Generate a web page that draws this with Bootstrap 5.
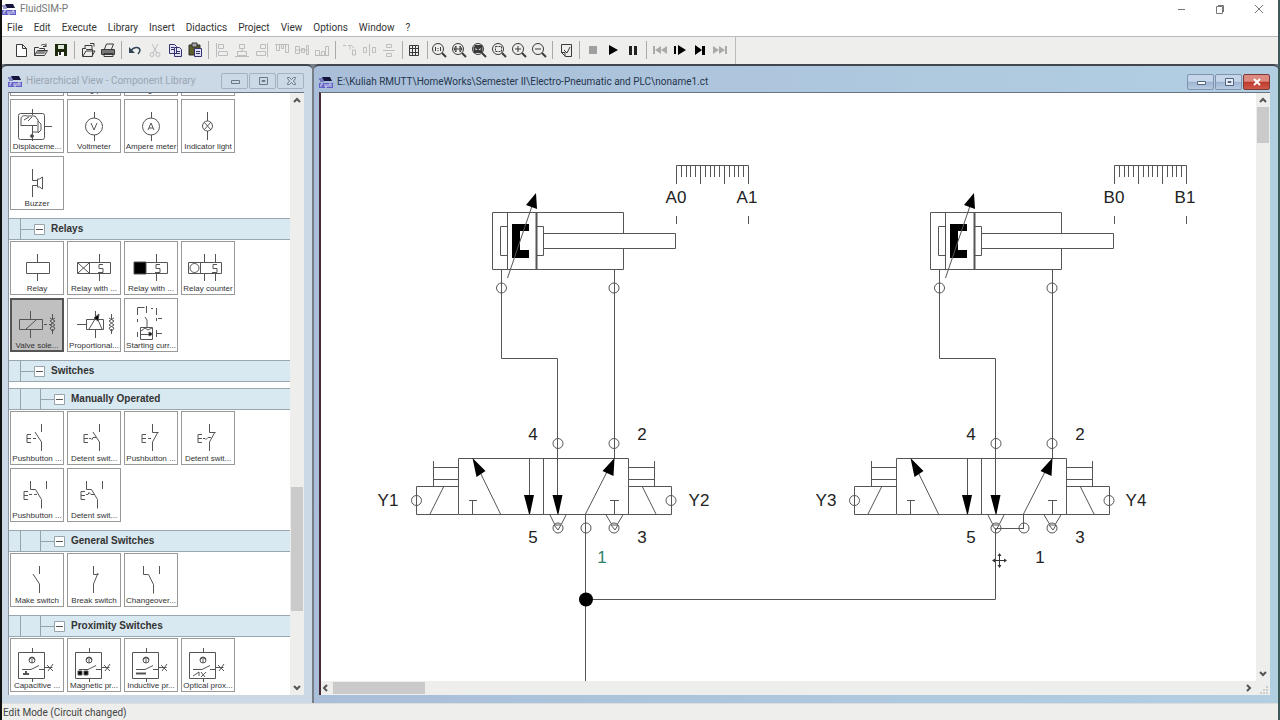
<!DOCTYPE html>
<html lang="en">
<head>
<meta charset="utf-8">
<meta name="viewport" content="width=device-width, initial-scale=1">
<title>FluidSIM-P</title>
<link href="https://cdn.jsdelivr.net/npm/bootstrap@5.3.0/dist/css/bootstrap.min.css" rel="stylesheet">
<style>
  body { font-family: Roboto, "Open Sans", sans-serif; font-size: 10px; line-height: 16px; color: #333; background: #eeeeed; }
  .app { border-left: 2px solid #111; border-right: 2px solid #3c5a5a; }
  button { border: 0; background: none; padding: 0; color: inherit; line-height: 1; }
  svg { display: block; }
  .ln { fill: none; stroke: currentColor; stroke-width: 1; }
  .app-title { height: 18px; color: #777; background: #fff; }
  .app-title button { width: 39px; height: 18px; color: #777; }
  .app-menu { height: 18px; background: #fff; }
  .app-menu a { padding: 0 6px 0 5px; color: #333; text-decoration: none; line-height: 19px; }
  .tools { height: 28px; border-top: 1px solid #bbb; background: #eeeeed; }
  .tools-band { border-right: 1px solid #bbb; padding: 0 5px 2px 9px; }
  .tool { width: 20px; height: 20px; color: #3a3a3a; }
  .tool svg { margin: 2px; }
  .tool:disabled { color: #bdbdbd; }
  .rule { width: 7px; height: 18px; border-left: 1px solid #aaa; margin-left: 3px; margin-right: -3px; }
  .rule-tight { width: 5px; }
  .mdi { min-height: 0; background: #777e86; gap: 2px; }
  .win { border-top: 2px solid #42474f; border-radius: 5px 5px 0 0; min-height: 0; }
  .win-lib { width: 310px; padding: 0 8px 8px 6px; background: #cbd8e6; }
  .win-doc { min-width: 0; padding: 0 8px 8px 5px; background: linear-gradient(90deg, #a9bed9, #b2cfe2); }
  .win-head { height: 26px; padding-top: 5px; }
  .win-lib .win-head { color: #9aa5b1; }
  .win-doc .win-head { color: #26364c; }
  .win-btn { width: 27px; height: 16px; margin-left: 1px; border: 1px solid #a5b1c0; border-radius: 2px; color: #6d7885; display: flex; align-items: center; justify-content: center; }
  .win-doc .win-btn { border-color: #7f93ad; background: linear-gradient(#c6d6ea 45%, #9cb3d0 50%, #b8cbe2); color: #52657e; }
  .win-doc .win-close { border-color: #7d3a3a; background: linear-gradient(#dd8b80 45%, #bd3a2c 50%, #cd5a4a); color: #fff; }
  .pane { border-top: 1px solid #6b7380; min-height: 0; background: #fff; }
  .win-lib .pane { border-left: 1px solid #8d97a4; }
  .win-doc .pane { border-left: 2px solid #4a2a34; }
  .tree { min-width: 0; overflow: hidden; font-family: "Liberation Sans", sans-serif; }
  .tree-top { margin-top: -52px; }
  .tiles { display: grid; grid-template-columns: repeat(4, 54px); gap: 3px; padding: 1px 0 8px 1px; }
  .tile { position: relative; height: 54px; border: 1px solid #999; background: #fff; color: #555; overflow: hidden; }
  .tile svg { position: absolute; left: -1px; top: -1px; }
  .tile span { position: absolute; left: 0; right: 0; bottom: 1px; text-align: center; font-size: 8px; line-height: 9px; color: #333; white-space: nowrap; }
  .tile.picked { background: #c0c0c0; border: 2px solid #555; }
  .tile.picked svg { left: -2px; top: -2px; }
  .tile.picked span { bottom: 0; }
  .sect { height: 22px; border-top: 1px solid #9aa6ae; border-bottom: 1px solid #9aa6ae; background: #d9e9f1; color: #333; font-size: 10px; font-weight: bold; }
  .sect + .sect { margin-top: 6px; }
  .sect svg { color: #98a4ab; }
  .sect button { font: inherit; line-height: 20px; display: flex; align-items: center; }
  .vbar { width: 14px; background: #eeeeed; color: #555; }
  .hbar { height: 14px; background: #eeeeed; color: #555; }
  .thumb { background: #cacaca; }
  .lib-above { flex: 0 0 384px; }
  .lib-thumb { height: 124px; width: 12px; }
  .doc-thumb { height: 36px; width: 12px; }
  .doc-hthumb { width: 92px; height: 12px; }
  .sheet { min-height: 0; min-width: 0; }
  .sheet svg { font: 17px "Liberation Sans", sans-serif; color: #555; }
  .state { height: 17px; padding: 1px 0 0 1px; background: #eeeeed; border-top: 1px solid #ddd; color: #444; }
</style>
</head>
<body>
<svg width="0" height="0" class="position-absolute" aria-hidden="true">
  <defs>
    <symbol id="logo" viewBox="0 0 14 12">
      <path d="M3 1h8l2 4H5z" fill="#14143c"/><path d="M0 3h4M1 5h4" stroke="#3838a0"/><path d="M0 7h14v5H0z" fill="#6060c8"/><path d="M2 11V8h2m2 0v3h2V8m2 3V8h2v3" class="ln" style="stroke:#dde"/>
    </symbol>
    <symbol id="lens" viewBox="0 0 16 16"><circle cx="7" cy="7" r="5.5" class="ln"/><path d="M11 11l4 4" stroke="currentColor" stroke-width="2"/></symbol>
    <symbol id="up" viewBox="0 0 8 6"><path d="M1 5l3-3 3 3" fill="none" stroke="currentColor" stroke-width="2"/></symbol>
    <symbol id="fold0" viewBox="0 0 38 20"><path d="M11.500 0v20M11.500 10.500h14" class="ln"/><path d="M25.500 5.500h10v10h-10z" fill="#fff" stroke="currentColor"/><path d="M27 10.500h7" stroke="#555"/></symbol>
    <symbol id="fold1" viewBox="0 0 58 20"><path d="M11.500 0v20M31.500 0v20M31.500 10.500h14" class="ln"/><path d="M45.500 5.500h10v10h-10z" fill="#fff" stroke="currentColor"/><path d="M47 10.500h7" stroke="#555"/></symbol>
    <symbol id="knob" viewBox="0 0 54 54"><path d="M21 23.500h-4v8h4M17 27.500h4" class="ln"/></symbol>
    <symbol id="prox" viewBox="0 0 54 54"><path d="M8.500 14.500h26v26h-26zM22.500 10v4M22.500 41v3M12 31.500h9l8-4M29 31.500h5M34.500 29.500h8M37 27l6 6M43 26l-5 7" class="ln"/><circle cx="22" cy="22" r="3" class="ln"/><path d="M22 19v6M19 22l3-3 3 3" class="ln"/></symbol>
    <g id="ruler" class="ln"><path d="M676.500 184V165.500H748.500V184M700.500 165v19M724.500 165v19M681.500 165v12M686.500 165v12M690.500 165v12M695.500 165v12M705.500 165v12M710.500 165v12M714.500 165v12M719.500 165v12M729.500 165v12M734.500 165v12M738.500 165v12M743.500 165v12M676.500 216v8M748.500 216v8"/></g>
    <g id="cylinder">
      <path class="ln" d="M492.500 212.500H623.500V269.500H492.500zM507.500 212v57M500.500 226.500h7v29h-7zM536.500 226.500h7v29h-7z"/>
      <path d="M536.500 212v57" stroke="currentColor" stroke-width="2"/>
      <path d="M543.500 233.500H675.500V248.500H543.500z" fill="#fff" stroke="currentColor"/>
      <path d="M512 224h17v7h-9v19h9v8h-17z" fill="#000"/>
      <path class="ln" d="M507.500 278L533 203"/><path d="M536 193l1 16-11-4z" fill="#000"/>
    </g>
    <g id="valve">
      <path class="ln" d="M458.500 458.500H628.500V514.500H458.500zM543.500 458v56M500.500 514L477 466M529.500 458v40M557.500 443v55M585.500 528v-14L610 466M469 500.500h8M472.500 500v14M610 500.500h9M614.500 500v14"/>
      <path d="M472.500 458l13 13-9 6zM614.500 458l-1 18-11-5zM524 495h10l-4 19h-1zM552.500 495h10l-4 19h-1z" fill="#000"/>
      <path class="ln" d="M458 486.500H416.500V514.500H458M443.500 487L430 514M433.500 461v25M433 467.500h25M433 479.500h25M628 486.500H671.500V514.500H628M642.500 487L656 514M654.500 461v25M628 467.500h27M628 479.500h27M549.500 514l5 10M566.500 514l-5 10M605.500 514l6 10M623.500 514l-6 10M554 525h7l-3 5-4-5M611 525h7l-3 5-4-5"/>
      <g class="ln"><circle cx="416.500" cy="500.500" r="5"/><circle cx="671" cy="500.500" r="5"/><circle cx="558" cy="443.500" r="5"/><circle cx="614" cy="443.500" r="5"/><circle cx="558" cy="528" r="5"/><circle cx="586" cy="528" r="5"/><circle cx="614" cy="528" r="5"/><circle cx="501.500" cy="288" r="5"/><circle cx="614" cy="288" r="5"/>
      <path d="M501.500 269v89.500H557.500V458M614.500 269V458"/></g>
    </g>
  </defs>
</svg>

<div class="app vh-100 d-flex flex-column overflow-hidden">
  <header class="app-title d-flex align-items-center">
    <svg width="14" height="12" class="me-1 flex-shrink-0"><use href="#logo"/></svg>
    <span>FluidSIM-P</span>
    <div class="ms-auto d-flex">
      <button aria-label="Minimize"><svg width="39" height="18" class="ln"><path d="M17 9.500h7"/></svg></button>
      <button aria-label="Restore"><svg width="39" height="18" class="ln"><path d="M16.500 6.500h6v7h-6zM18 5.500h5.500V12"/></svg></button>
      <button aria-label="Close"><svg width="39" height="18" class="ln"><path d="M16 5l8 8M24 5l-8 8"/></svg></button>
    </div>
  </header>
  <nav class="app-menu d-flex" aria-label="Main menu">
    <a href="#">File</a><a href="#">Edit</a><a href="#">Execute</a><a href="#">Library</a><a href="#">Insert</a><a href="#">Didactics</a><a href="#">Project</a><a href="#">View</a><a href="#">Options</a><a href="#">Window</a><a href="#">?</a>
  </nav>

  <div class="tools d-flex flex-shrink-0" role="toolbar" aria-label="Tools">
    <div class="tools-band d-flex align-items-center">
      <button class="tool" aria-label="New"><svg width="16" height="16"><path d="M3.500 2.500h6l4 4v8h-10zM9.500 2.500v4h4" class="ln" style="fill:#fff"/></svg></button>
      <button class="tool" aria-label="Open"><svg width="16" height="16"><path d="M1.500 13.500v-8h4l1 1h5v2M1.500 13.500l3-5h10l-3 5zM8 3.500c2-2 4-1 5 1m0-3v3h-3" class="ln"/><path d="M3 12l2-3h8l-2 3z" fill="#888"/></svg></button>
      <button class="tool" aria-label="Save"><svg width="16" height="16"><path d="M2 2h12v12H2z" fill="#1d2a10"/><path d="M5 3h6v4H5z" fill="#dfe6da"/><path d="M5 10h6v4H5z" fill="#fff"/><path d="M6 10h2v3H6z" fill="#222"/></svg></button>
      <span class="rule"></span>
      <button class="tool" aria-label="Preview"><svg width="16" height="16"><path d="M2.500 14.500v-8h3l1 1h6v7zM5 7V3.500h7V7M3 14l3-5h9l-3 5M10 1.500h4v3" class="ln"/></svg></button>
      <button class="tool" aria-label="Print"><svg width="16" height="16"><path d="M2 7h12v5H2z" fill="#777"/><path d="M4.500 7l2-5h7l-2 5M1.500 7.500h13v5h-13zM4 14.500h9v-3H4z" class="ln"/></svg></button>
      <span class="rule"></span>
      <button class="tool" aria-label="Undo"><svg width="16" height="16"><path d="M4 9c2-4 8-5 9-1 0 2-1 3-2 4" fill="none" stroke="#345" stroke-width="1.500"/><path d="M2 5v6h6z" fill="#345"/></svg></button>
      <button class="tool" disabled aria-label="Cut"><svg width="16" height="16"><path d="M5 2l5 9M11 2L6 11" class="ln"/><circle cx="5" cy="12.500" r="2" class="ln"/><circle cx="11" cy="12.500" r="2" class="ln"/></svg></button>
      <button class="tool" aria-label="Copy"><svg width="16" height="16" stroke="#33336e" fill="#e4e4f4"><path d="M2.500 2.500h5l2 2v7h-7zM7.500 5.500h5l2 2v7h-7z"/><path d="M4 5.500h3M4 7.500h3M9 9.500h4M9 11.500h4"/></svg></button>
      <button class="tool" aria-label="Paste"><svg width="16" height="16"><path d="M2 3h11v10H2z" fill="#5d5d28" stroke="#333"/><path d="M5 1h5v4H5z" fill="#aaa" stroke="#333"/><path d="M7.500 6.500h7v8h-7z" fill="#dfdff4" stroke="#33336e"/><path d="M9 9.500h4M9 11.500h4" stroke="#33336e"/></svg></button>
      <span class="rule"></span>
      <button class="tool" disabled aria-label="Align left"><svg width="16" height="16" class="ln"><path d="M2.500 1v14M4.500 2.500h5v4h-5zM4.500 9.500h9v4h-9z"/></svg></button>
      <button class="tool" disabled aria-label="Center horizontally"><svg width="16" height="16" class="ln"><path d="M5.500 2.500h5v4h-5zM3.500 9.500h9v4h-9zM8 6v4M1 14.500h14"/></svg></button>
      <button class="tool" disabled aria-label="Align right"><svg width="16" height="16" class="ln"><path d="M13.500 1v14M6.500 2.500h5v4h-5zM2.500 9.500h9v4h-9z"/></svg></button>
      <button class="tool" disabled aria-label="Align top"><svg width="16" height="16" class="ln"><path d="M1 2.500h14M2.500 2.500h3v6h-3zM7.500 2.500h2v4h-2zM11.500 2.500h3v8h-3z"/></svg></button>
      <button class="tool" disabled aria-label="Center vertically"><svg width="16" height="16" class="ln"><path d="M1.500 4.500h4v7h-4zM7.500 6.500h3v4h-3zM12.500 3.500h2v9h-2zM1 8h14"/></svg></button>
      <button class="tool" disabled aria-label="Align bottom"><svg width="16" height="16" class="ln"><path d="M1 13.500h14M1.500 8.500h4v5h-4zM7.500 9.500h3v4h-3zM11.500 4.500h3v9h-3z"/></svg></button>
      <span class="rule"></span>
      <button class="tool" disabled aria-label="Rotate"><svg width="16" height="16" class="ln"><path d="M2 3.500h3M7 3.500h2v4M11.500 8v5h3V8zM10 3l3 3"/></svg></button>
      <button class="tool" disabled aria-label="Mirror horizontally"><svg width="16" height="16" class="ln"><path d="M8.500 2v12M2.500 5.500h3v5h-3zM11.500 5.500h3v5h-3z"/></svg></button>
      <button class="tool" disabled aria-label="Mirror vertically"><svg width="16" height="16" class="ln"><path d="M2 8.500h12M5.500 2.500h5v3h-5zM5.500 11.500h5v3h-5z"/></svg></button>
      <span class="rule rule-tight"></span>
      <button class="tool" aria-label="Grid"><svg width="16" height="16"><path d="M3.500 3.500h9v10h-9zM6.500 3v11M9.500 3v11M3 6.500h10M3 10.500h10" class="ln"/></svg></button>
      <span class="rule rule-tight"></span>
      <button class="tool" aria-label="Zoom 1:1"><svg width="16" height="16"><use href="#lens"/><path d="M4.500 5v4M9.500 5v4M7 6v1M7 8v1" class="ln"/></svg></button>
      <button class="tool" aria-label="Previous zoom"><svg width="16" height="16"><use href="#lens"/><path d="M3 7h8M5 4v6l-2-3zM9 4v6l2-3z" class="ln"/></svg></button>
      <button class="tool" aria-label="Fit to window"><svg width="16" height="16"><use href="#lens"/><path d="M4 4l6 6M10 4l-6 6M3.500 5v5h7V4h-7" class="ln" style="stroke-width:2"/></svg></button>
      <button class="tool" aria-label="Zoom section"><svg width="16" height="16"><use href="#lens"/><path d="M4.500 4.500h6v5h-6z" class="ln" stroke-dasharray="2 1"/></svg></button>
      <button class="tool" aria-label="Zoom in"><svg width="16" height="16"><use href="#lens"/><path d="M4 7h6M7 4v6" class="ln"/></svg></button>
      <button class="tool" aria-label="Zoom out"><svg width="16" height="16"><use href="#lens"/><path d="M4 7h6" class="ln"/></svg></button>
      <span class="rule"></span>
      <button class="tool" aria-label="Check drawing"><svg width="16" height="16"><path d="M3.500 2.500h10v12h-6l-4-4zM3 10.500h4v4M6 8l3 3 3-6" class="ln"/></svg></button>
      <span class="rule"></span>
      <button class="tool" disabled aria-label="Stop"><svg width="16" height="16"><path d="M4 4h8v8H4z" fill="#a0a0a0"/></svg></button>
      <button class="tool" aria-label="Start"><svg width="16" height="16"><path d="M4 3l9 5-9 5z" fill="#000"/></svg></button>
      <button class="tool" aria-label="Pause"><svg width="16" height="16"><path d="M4 4h3v9H4zM9 4h3v9H9z" fill="#222"/></svg></button>
      <span class="rule"></span>
      <button class="tool" disabled aria-label="Reset"><svg width="16" height="16" fill="#aaa"><path d="M1 4h2v8H1zM9 4v8L3 8zM15 4v8L9 8z"/></svg></button>
      <button class="tool" aria-label="Single step"><svg width="16" height="16"><path d="M2 4h2v8H2zM6 3l8 5-8 5z" fill="#000"/></svg></button>
      <button class="tool" aria-label="Simulate to state change"><svg width="16" height="16"><path d="M3 3l7 5-7 5zM10 4h3v9h-3z" fill="#000"/></svg></button>
      <button class="tool" disabled aria-label="Next topic"><svg width="16" height="16" fill="#aaa"><path d="M13 4h2v8h-2zM1 4v8l6-4zM7 4v8l6-4z"/></svg></button>
    </div>
  </div>

  <main class="mdi d-flex flex-grow-1">
    <section class="win win-lib d-flex flex-column flex-shrink-0" aria-label="Component Library">
      <div class="win-head d-flex align-items-center">
        <svg width="14" height="12" class="me-1 flex-shrink-0"><use href="#logo"/></svg>
        <span class="flex-grow-1 text-nowrap">Hierarchical View - Component Library</span>
        <button class="win-btn" aria-label="Minimize"><svg width="12" height="8" class="ln"><path d="M2.500 3.500h8v3h-8z"/></svg></button>
        <button class="win-btn" aria-label="Restore"><svg width="12" height="8" class="ln"><path d="M2.500.5h8v7h-8zM5 3.500h3v1H5z"/></svg></button>
        <button class="win-btn" aria-label="Close"><svg width="12" height="8" class="ln"><path d="M2.500.5h2l2 2 2-2h2v1l-2 2.500 2 2.500v1h-2l-2-2-2 2h-2v-1l2-2.500-2-2.500z"/></svg></button>
      </div>
      <div class="pane d-flex flex-grow-1">
        <div class="tree flex-grow-1">
          <div class="tree-top">
            <div class="tiles">
              <div class="tile"><span>Distance s...</span></div><div class="tile"><span>Analog pres...</span></div><div class="tile"><span>Analog flow...</span></div><div class="tile"><span>Flow sensor</span></div>
              <div class="tile"><svg width="54" height="54" class="ln"><rect x="8.500" y="14.500" width="26" height="26" rx="2"/><path d="M22.500 10v6M22.500 26v16M34 27.500h8M11 27v-7c0-3 3-4 6-3h8l3 4v12h-6M11 26.500h16M28 22l3 3v6l-3 3M14 21l5-3M18 22l4-4"/><circle cx="22" cy="37" r="1.500" fill="#555"/></svg><span>Displaceme...</span></div>
              <div class="tile"><svg width="54" height="54" class="ln"><circle cx="27" cy="27.500" r="8.500"/><path d="M27.500 13v6M27.500 36v6M24 24l3 7 3-7"/></svg><span>Voltmeter</span></div>
              <div class="tile"><svg width="54" height="54" class="ln"><circle cx="27" cy="27.500" r="8.500"/><path d="M27.500 13v6M27.500 36v6M24 31l3-7 3 7M25 29h4"/></svg><span>Ampere meter</span></div>
              <div class="tile"><svg width="54" height="54" class="ln"><circle cx="26.500" cy="27" r="5"/><path d="M26.500 13v9M26.500 32v9M23 23l7 8M30 23l-7 8"/></svg><span>Indicator light</span></div>
              <div class="tile"><svg width="54" height="54" class="ln"><path d="M22.500 13v11.500h5M22.500 41V29.500h5M27.500 23v8h2l3 2V21l-3 2z"/></svg><span>Buzzer</span></div>
            </div>
          </div>
          <div class="sect"><button><svg width="38" height="20" class="me-1"><use href="#fold0"/></svg>Relays</button></div>
          <div class="tiles">
            <div class="tile"><svg width="54" height="54" class="ln"><path d="M16.500 21.500h23v11h-23zM27.500 13v8M27.500 33v7"/></svg><span>Relay</span></div>
            <div class="tile"><svg width="54" height="54" class="ln"><path d="M10.500 21.500h33v11h-33zM22.500 21v11M11 22l11 10M22 22L11 32M32.500 13v8M32.500 33v7M36 23.500h-4v4h4v4h-5"/></svg><span>Relay with ...</span></div>
            <div class="tile"><svg width="54" height="54" class="ln"><path d="M10.500 21.500h33v11h-33zM32.500 13v8M32.500 33v7M36 23.500h-4v4h4v4h-5"/><path d="M10 21h12v12H10z" fill="#000"/></svg><span>Relay with ...</span></div>
            <div class="tile"><svg width="54" height="54" class="ln"><path d="M7.500 21.500h33v11h-33zM19.500 21v11M23.500 13v8M23.500 33v7M34.500 13v8M34.500 33v7M36 23.500h-4v4h4v4h-5"/><circle cx="13.500" cy="27" r="4.500"/></svg><span>Relay counter</span></div>
            <div class="tile picked"><svg width="54" height="54" class="ln"><path d="M9.500 21.500h23v10h-23zM16 31l10-9M20.500 13v8M20.500 32v8M34 26.500h3M39 26.500h3M42.500 16v5M42.500 31v5M40 20l5 3-5 4 5 3-2 3M45 20l-5 3 5 4-5 3 2 3"/></svg><span>Valve sole...</span></div>
            <div class="tile"><svg width="54" height="54" class="ln"><path d="M10 26.500h9M19.500 21.500h17v10h-17zM28.500 13v8M28.500 32v8M22 31l8-13M31 22l4 9M44.500 16v5M44.500 31v5M42 20l5 3-5 4 5 3-2 3M47 20l-5 3 5 4-5 3 2 3"/><path d="M32 16l-1 7-4-3z" fill="#000"/></svg><span>Proportional...</span></div>
            <div class="tile"><svg width="54" height="54" class="ln"><path d="M13.500 17V9.500h7M22.500 8v7M27 10.500h2M32.500 10v7M13.500 21v3M13.500 34v5M21 19l2 3v7M32.500 20v3M34 20.500h4M16.500 29.500h12v12h-12zM17 33l4-3 3 2 4-2M16 36.500h11M32.500 32v7M33 35.500h5"/><path d="M25 34l4 2-4 2z" fill="#000"/></svg><span>Starting curr...</span></div>
          </div>
          <div class="sect"><button><svg width="38" height="20" class="me-1"><use href="#fold0"/></svg>Switches</button></div>
          <div class="sect"><button><svg width="58" height="20" class="me-1"><use href="#fold1"/></svg>Manually Operated</button></div>
          <div class="tiles">
            <div class="tile"><svg width="54" height="54" class="ln"><use href="#knob"/><path d="M31.500 13v8M25 21l6.500 10v9M23 27.500h3"/></svg><span>Pushbutton ...</span></div>
            <div class="tile"><svg width="54" height="54" class="ln"><use href="#knob"/><path d="M32.500 13v8M26 21l6.500 10v9M22 27.500h2l1 1 1-2h3"/></svg><span>Detent swit...</span></div>
            <div class="tile"><svg width="54" height="54" class="ln"><use href="#knob" x="1"/><path d="M28.500 13v8.500h6M34 21l-5.500 10v9M24 27.500h3"/></svg><span>Pushbutton ...</span></div>
            <div class="tile"><svg width="54" height="54" class="ln"><use href="#knob"/><path d="M28.500 13v8.500h6M34 21l-5.500 10v9M22 27.500h2l1 1 2-2h3"/></svg><span>Detent swit...</span></div>
            <div class="tile"><svg width="54" height="54" class="ln"><use href="#knob" x="-3"/><path d="M20.500 13v8.500h5l6 10v9M36.500 13v8M19 26.500h3M24 26.500h3"/></svg><span>Pushbutton ...</span></div>
            <div class="tile"><svg width="54" height="54" class="ln"><use href="#knob" x="-3"/><path d="M19.500 13v8.500h5l6 10v9M35.500 13v8M19 26.500h2l1-2 2 2h3"/></svg><span>Detent swit...</span></div>
          </div>
          <div class="sect"><button><svg width="58" height="20" class="me-1"><use href="#fold1"/></svg>General Switches</button></div>
          <div class="tiles">
            <div class="tile"><svg width="54" height="54" class="ln"><path d="M29.500 13v8M23 21l6.500 10v9"/></svg><span>Make switch</span></div>
            <div class="tile"><svg width="54" height="54" class="ln"><path d="M26.500 13v8.500h5M31 20l-4.500 11v9"/></svg><span>Break switch</span></div>
            <div class="tile"><svg width="54" height="54" class="ln"><path d="M19.500 13v8.500h5l5 10v9M35.500 13v8"/></svg><span>Changeover...</span></div>
          </div>
          <div class="sect"><button><svg width="58" height="20" class="me-1"><use href="#fold1"/></svg>Proximity Switches</button></div>
          <div class="tiles">
            <div class="tile"><svg width="54" height="54" class="ln"><use href="#prox"/><path d="M13 36h6M16 33v3" stroke-width="2"/></svg><span>Capacitive ...</span></div>
            <div class="tile"><svg width="54" height="54" class="ln"><use href="#prox"/><path d="M11 33h4v4h-4zM17 33h4v4h-4z" fill="#000"/></svg><span>Magnetic pr...</span></div>
            <div class="tile"><svg width="54" height="54" class="ln"><use href="#prox"/><path d="M12 35.500h10" stroke-width="2"/></svg><span>Inductive pr...</span></div>
            <div class="tile"><svg width="54" height="54" class="ln"><use href="#prox"/><path d="M12 38l6-4v4M20 34l4 5M25 34l-5 5"/></svg><span>Optical prox...</span></div>
          </div>
        </div>
        <div class="vbar d-flex flex-column align-items-center py-1 flex-shrink-0">
          <svg width="8" height="6" class="flex-shrink-0"><use href="#up"/></svg>
          <div class="lib-above"></div>
          <div class="thumb lib-thumb"></div>
          <svg width="8" height="6" class="mt-auto flex-shrink-0" viewBox="0 0 8 6"><path d="M1 1l3 3 3-3" fill="none" stroke="currentColor" stroke-width="2"/></svg>
        </div>
      </div>
    </section>

    <section class="win win-doc d-flex flex-column flex-grow-1" aria-label="noname1.ct">
      <div class="win-head d-flex align-items-center">
        <svg width="14" height="12" class="me-1 flex-shrink-0"><use href="#logo"/></svg>
        <span class="flex-grow-1 text-nowrap">E:\Kuliah RMUTT\HomeWorks\Semester II\Electro-Pneumatic and PLC\noname1.ct</span>
        <button class="win-btn" aria-label="Minimize"><svg width="12" height="8" class="ln"><path d="M2.500 3.500h8v3h-8z" style="fill:#fff"/></svg></button>
        <button class="win-btn" aria-label="Restore"><svg width="12" height="8" class="ln"><path d="M2.500.5h8v7h-8zM5 3.500h3v1H5z" style="fill:#e8eef6"/></svg></button>
        <button class="win-btn win-close" aria-label="Close"><svg width="12" height="8"><path d="M3 1l6 6M9 1L3 7" stroke="#fff" stroke-width="2"/></svg></button>
      </div>
      <div class="pane d-flex flex-column flex-grow-1">
        <div class="d-flex flex-grow-1 sheet">
          <div class="sheet flex-grow-1 position-relative overflow-hidden">
            <svg class="position-absolute w-100 h-100" role="img" aria-label="Electro-pneumatic circuit">
              <g transform="translate(-321 -93)">
                <use href="#ruler"/><use href="#cylinder"/><use href="#valve"/>
                <use href="#ruler" x="438"/><use href="#cylinder" x="438"/><use href="#valve" x="438"/>
                <path class="ln" d="M585.500 528V1400M586 599.500H995.500V528.500H1024"/>
                <circle cx="586" cy="599.500" r="7" fill="#000"/>
                <g stroke="#333" fill="#333"><path d="M993 560.500h13M999.500 554v13"/><path d="M992 560.500l3-2v4zM1007 560.500l-3-2v4zM999.500 553l-2 3h4zM999.500 568l-2-3h4z" stroke="none"/></g>
                <g text-anchor="middle" fill="#222">
                  <text x="676" y="203">A0</text><text x="747" y="203">A1</text>
                  <text x="533" y="440">4</text><text x="642" y="440">2</text><text x="533" y="543">5</text><text x="642" y="543">3</text><text x="602" y="563" fill="#2f7f6c">1</text>
                  <text x="388" y="506">Y1</text><text x="699" y="506">Y2</text>
                  <text x="1114" y="203">B0</text><text x="1185" y="203">B1</text>
                  <text x="971" y="440">4</text><text x="1080" y="440">2</text><text x="971" y="543">5</text><text x="1080" y="543">3</text><text x="1040" y="563">1</text>
                  <text x="826" y="506">Y3</text><text x="1136" y="506">Y4</text>
                </g>
              </g>
            </svg>
          </div>
          <div class="vbar d-flex flex-column align-items-center py-1 flex-shrink-0">
            <svg width="8" height="6" class="mb-1 flex-shrink-0"><use href="#up"/></svg>
            <div class="thumb doc-thumb"></div>
            <svg width="8" height="6" class="mt-auto flex-shrink-0" viewBox="0 0 8 6"><path d="M1 1l3 3 3-3" fill="none" stroke="currentColor" stroke-width="2"/></svg>
          </div>
        </div>
        <div class="hbar d-flex align-items-center flex-shrink-0">
          <svg width="8" height="8" viewBox="0 0 8 8" class="me-1 ms-0"><path d="M6 1L3 4l3 3" fill="none" stroke="currentColor" stroke-width="2"/></svg>
          <div class="thumb doc-hthumb"></div>
          <svg width="8" height="8" viewBox="0 0 8 8" class="ms-auto"><path d="M3 1l3 3-3 3" fill="none" stroke="currentColor" stroke-width="2"/></svg>
          <svg width="18" height="14"><path d="M14 5h2v2h-2zM11 8h2v2h-2zM14 8h2v2h-2zM8 11h2v2H8zM11 11h2v2h-2zM14 11h2v2h-2z" fill="#ccc"/></svg>
        </div>
      </div>
    </section>
  </main>
  <footer class="state flex-shrink-0">Edit Mode (Circuit changed)</footer>
</div>
<script src="https://cdn.jsdelivr.net/npm/bootstrap@5.3.0/dist/js/bootstrap.bundle.min.js"></script>
</body>
</html>
